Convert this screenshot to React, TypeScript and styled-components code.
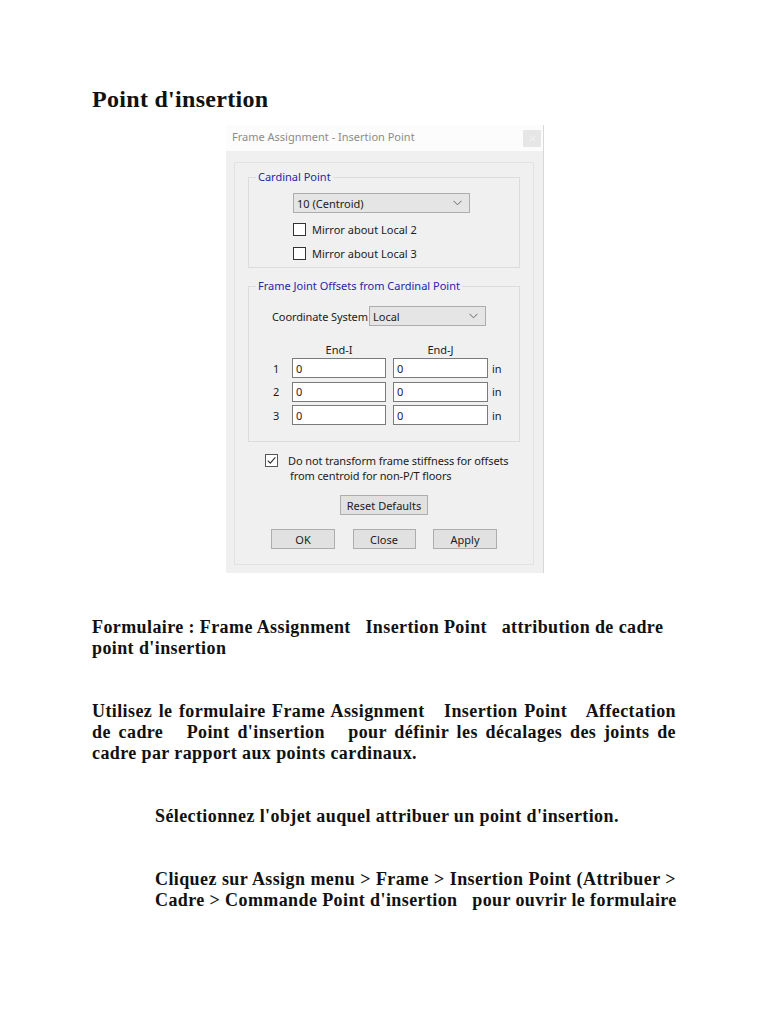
import styled, { createGlobalStyle } from "styled-components";

const GlobalStyle = createGlobalStyle`
  html, body {
    margin: 0;
    padding: 0;
    background: #fff;
  }
  body {
    font-family: "Liberation Serif", serif;
    color: #111;
  }
`;

const Page = styled.div`
  width: 768px;
  box-sizing: border-box;
  padding: 85px 92px 80px;
`;

const Heading = styled.h1`
  margin: 0;
  font: bold 24px/28px "Liberation Serif", serif;
  letter-spacing: 0.3px;
  color: #111;
`;

const Dialog = styled.div`
  margin: 12px 0 0 134px;
  width: 317px;
  font-family: "Noto Sans", sans-serif;
  font-size: 11px;
  color: #1b1b1b;
  border-right: 1px solid #d8d8d8;
  white-space: nowrap;
`;

const TitleBar = styled.div`
  height: 26px;
  display: flex;
  align-items: center;
  justify-content: space-between;
  padding: 0 2px 3px 6px;
  box-sizing: border-box;
  background: #fcfcfc;
  color: #8c8c8c;
`;

const CloseBox = styled.span`
  width: 18px;
  height: 17px;
  margin-top: 3px;
  background: #e6e6e6;
  display: flex;
  align-items: center;
  justify-content: center;
`;

const Body = styled.div`
  background: #f0f0f0;
  padding: 11px 9px 8px 8px;
`;

const Panel = styled.div`
  border: 1px solid #e2e2e2;
  padding: 8px 13px 15px;
  display: flex;
  flex-direction: column;
`;

const Group = styled.fieldset<{ $gap?: number }>`
  margin: ${(p) => p.$gap ?? 0}px 0 0;
  padding: 0;
  border: 1px solid #dcdcdc;
  min-width: 0;
`;

const Legend = styled.legend`
  margin-left: 7px;
  padding: 0 2px;
  line-height: 12px;
  color: #2626aa;
`;

const GroupBody = styled.div<{ $pad: string }>`
  padding: ${(p) => p.$pad};
  display: flex;
  flex-direction: column;
`;

const Select = styled.div<{ $w: number }>`
  width: ${(p) => p.$w}px;
  height: 20px;
  box-sizing: border-box;
  background: #e5e5e5;
  border: 1px solid #adadad;
  display: flex;
  align-items: center;
  justify-content: space-between;
  padding: 0 7px 0 3px;
`;

const CheckRow = styled.label<{ $gap: number }>`
  display: flex;
  align-items: center;
  gap: 6px;
  margin-top: ${(p) => p.$gap}px;
  line-height: 13px;
`;

const Box = styled.span`
  width: 13px;
  height: 13px;
  box-sizing: border-box;
  border: 1px solid #333;
  background: #fff;
  display: flex;
  align-items: center;
  justify-content: center;
  flex-shrink: 0;
`;

const CoordRow = styled.div`
  display: flex;
  align-items: center;
  padding-left: 23px;
`;

const CoordLabel = styled.span`
  width: 97px;
  letter-spacing: -0.1px;
`;

const OffsetGrid = styled.div`
  display: grid;
  grid-template-columns: 19px 94px 102px auto;
  row-gap: 3.5px;
  align-items: center;
  margin-top: 18px;
  padding-left: 24px;
`;

const ColHead = styled.span<{ $col: number; $shift?: number }>`
  grid-column: ${(p) => p.$col};
  text-align: center;
  line-height: 12px;
  margin: 0 0 -1.5px ${(p) => p.$shift ?? 0}px;
`;

const RowNum = styled.span`
  grid-column: 1;
`;

const Field = styled.div<{ $shift?: number }>`
  height: 20px;
  box-sizing: border-box;
  background: #fff;
  border: 1px solid #7a7a7a;
  display: flex;
  align-items: center;
  padding-left: 3px;
  margin-left: ${(p) => p.$shift ?? 0}px;
  color: #1b1b1b;
`;

const Unit = styled.span`
  padding-left: 4px;
`;

const Note = styled.div`
  display: flex;
  align-items: flex-start;
  gap: 10px;
  margin-top: 11px;
  padding-left: 17px;
  line-height: 15px;

  ${Box} {
    margin-top: 1px;
    border-color: #555;
  }
`;

const NoteText = styled.div`
  display: flex;
  flex-direction: column;
  letter-spacing: -0.1px;

  span + span {
    padding-left: 2px;
  }
`;

const Button = styled.button<{ $w: number }>`
  width: ${(p) => p.$w}px;
  height: 20px;
  padding: 0;
  background: #e1e1e1;
  border: 1px solid #adadad;
  font: 11px "Noto Sans", sans-serif;
  color: #1b1b1b;
`;

const ResetButton = styled(Button)`
  align-self: center;
  margin-top: 12px;
`;

const ButtonRow = styled.div`
  display: flex;
  justify-content: center;
  gap: 17.5px;
  margin-top: 14px;
`;

const Para = styled.div<{ $indent?: boolean; $gap?: number }>`
  margin: ${(p) => p.$gap ?? 42}px 0 0 ${(p) => (p.$indent ? "63px" : "0")};
  font: bold 18px/21px "Liberation Serif", serif;
  letter-spacing: 0.4px;
  color: #111;
`;

const Line = styled.span<{ $justify?: boolean }>`
  display: block;
  white-space: nowrap;
  text-align: ${(p) => (p.$justify ? "justify" : "left")};
  text-align-last: ${(p) => (p.$justify ? "justify" : "left")};
`;

function Chevron() {
  return (
    <svg width="9" height="6" viewBox="0 0 9 6">
      <polyline points="0.5,0.8 4.5,4.8 8.5,0.8" fill="none" stroke="#666" strokeWidth="1" />
    </svg>
  );
}

function Check() {
  return (
    <svg width="11" height="11" viewBox="0 0 11 11">
      <polyline points="1.8,5.6 4.3,8.2 9.3,2.4" fill="none" stroke="#333" strokeWidth="1.2" />
    </svg>
  );
}

const gap = " \u00a0 ";

export default function App() {
  const rows = ["1", "2", "3"];
  return (
    <>
      <GlobalStyle />
      <Page>
        <Heading>Point d'insertion</Heading>

        <Dialog>
          <TitleBar>
            <span>Frame Assignment - Insertion Point</span>
            <CloseBox>
              <svg width="7" height="7" viewBox="0 0 7 7">
                <path d="M1 1 L6 6 M6 1 L1 6" stroke="#f4f4f4" strokeWidth="1" />
              </svg>
            </CloseBox>
          </TitleBar>
          <Body>
            <Panel>
              <Group>
                <Legend>Cardinal Point</Legend>
                <GroupBody $pad="10px 0 7px 44px">
                  <Select $w={177}>
                    <span>10 (Centroid)</span>
                    <Chevron />
                  </Select>
                  <CheckRow $gap={10}>
                    <Box />
                    Mirror about Local 2
                  </CheckRow>
                  <CheckRow $gap={11}>
                    <Box />
                    Mirror about Local 3
                  </CheckRow>
                </GroupBody>
              </Group>

              <Group $gap={12}>
                <Legend>Frame Joint Offsets from Cardinal Point</Legend>
                <GroupBody $pad="14px 0 16px 0">
                  <CoordRow>
                    <CoordLabel>Coordinate System</CoordLabel>
                    <Select $w={117}>
                      <span>Local</span>
                      <Chevron />
                    </Select>
                  </CoordRow>
                  <OffsetGrid>
                    <ColHead $col={2}>End-I</ColHead>
                    <ColHead $col={3} $shift={7}>End-J</ColHead>
                    {rows.map((r) => [
                      <RowNum key={"n" + r}>{r}</RowNum>,
                      <Field key={"i" + r}>0</Field>,
                      <Field key={"j" + r} $shift={7}>0</Field>,
                      <Unit key={"u" + r}>in</Unit>,
                    ])}
                  </OffsetGrid>
                </GroupBody>
              </Group>

              <Note>
                <Box>
                  <Check />
                </Box>
                <NoteText>
                  <span>Do not transform frame stiffness for offsets</span>
                  <span>from centroid for non-P/T floors</span>
                </NoteText>
              </Note>

              <ResetButton $w={88}>Reset Defaults</ResetButton>

              <ButtonRow>
                <Button $w={64}>OK</Button>
                <Button $w={63}>Close</Button>
                <Button $w={64}>Apply</Button>
              </ButtonRow>
            </Panel>
          </Body>
        </Dialog>

        <Para $gap={44}>
          <Line>Formulaire : Frame Assignment{gap}Insertion Point{gap}attribution de cadre</Line>
          <Line>point d'insertion</Line>
        </Para>

        <Para>
          <Line $justify>Utilisez le formulaire Frame Assignment{gap}Insertion Point{gap}Affectation</Line>
          <Line $justify>de cadre{gap}Point d'insertion{gap}pour définir les décalages des joints de</Line>
          <Line>cadre par rapport aux points cardinaux.</Line>
        </Para>

        <Para $indent>
          <Line>Sélectionnez l'objet auquel attribuer un point d'insertion.</Line>
        </Para>

        <Para $indent>
          <Line $justify>Cliquez sur Assign menu &gt; Frame &gt; Insertion Point (Attribuer &gt;</Line>
          <Line $justify>Cadre &gt; Commande Point d'insertion{gap}pour ouvrir le formulaire</Line>
        </Para>
      </Page>
    </>
  );
}
